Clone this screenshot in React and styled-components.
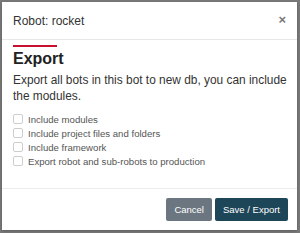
import React from "react"
import styled, { createGlobalStyle } from "styled-components"

const GlobalStyle = createGlobalStyle`
  html, body {
    margin: 0;
    padding: 0;
    background: #7a7a7a;
    font-family: "Liberation Sans", Arial, sans-serif;
  }
`

const options = [
  "Include modules",
  "Include project files and folders",
  "Include framework",
  "Export robot and sub-robots to production",
]

const App = () => {
  return (
    <Backdrop>
      <GlobalStyle />
      <Modal>
        <Header>
          <Title>Robot: rocket</Title>
          <CloseButton aria-label="Close">×</CloseButton>
        </Header>

        <Body>
          <Accent />
          <Heading>Export</Heading>
          <Lead>Export all bots in this bot to new db, you can include the modules.</Lead>

          <OptionList>
            {options.map((label) => (
              <Option key={label}>
                <Box type="checkbox" />
                <span>{label}</span>
              </Option>
            ))}
          </OptionList>
        </Body>

        <Footer>
          <Button $variant="secondary">Cancel</Button>
          <Button $variant="primary">Save / Export</Button>
        </Footer>
      </Modal>
    </Backdrop>
  )
}

const Backdrop = styled.div`
  width: 300px;
  height: 233px;
  padding: 2px 3px 3px 2px;
  box-sizing: border-box;
`

const Modal = styled.div`
  height: 228px;
  background: #fff;
  display: flex;
  flex-direction: column;
  box-shadow: 0 1px 3px rgba(0, 0, 0, 0.25);
`

const Header = styled.div`
  height: 37px;
  padding: 0 11px;
  display: flex;
  align-items: center;
  justify-content: space-between;
  border-bottom: 1px solid #e8e8e8;
`

const Title = styled.h1`
  margin: 0;
  font-size: 12px;
  font-weight: normal;
  color: #333;
`

const CloseButton = styled.button`
  border: 0;
  background: none;
  padding: 0;
  margin-top: -3px;
  font-family: "Liberation Sans", Arial, sans-serif;
  font-size: 13px;
  font-weight: bold;
  color: #777;
  line-height: 1;
`

const Body = styled.div`
  flex: 1;
  padding: 5px 6px 0 11px;
`

const Accent = styled.div`
  width: 44px;
  height: 2px;
  background: #c8102e;
`

const Heading = styled.h2`
  margin: 2px 0 0;
  font-size: 16px;
  line-height: 20px;
  font-weight: bold;
  color: #222;
`

const Lead = styled.p`
  margin: 3px 0 0;
  font-size: 11.9px;
  line-height: 16px;
  color: #333;
`

const OptionList = styled.div`
  margin-top: 8px;
  display: flex;
  flex-direction: column;
`

const Option = styled.label`
  height: 14px;
  display: flex;
  align-items: center;
  gap: 5px;
  font-size: 9.6px;
  color: #555;
`

const Box = styled.input`
  appearance: none;
  margin: 0;
  width: 10px;
  height: 10px;
  border: 1px solid #cdcdcd;
  border-radius: 2px;
  background: #fff;
`

const Footer = styled.div`
  height: 41px;
  padding: 0 9px;
  border-top: 1px solid #ececec;
  display: flex;
  align-items: center;
  justify-content: flex-end;
  gap: 3px;
`

const Button = styled.button`
  height: 23px;
  padding: 0 8px;
  border: 0;
  border-radius: 2px;
  font-family: "Liberation Sans", Arial, sans-serif;
  font-size: 9.5px;
  color: #fff;
  background: ${(p) => (p.$variant === "primary" ? "#1d4658" : "#6b7681")};
`

export default App
